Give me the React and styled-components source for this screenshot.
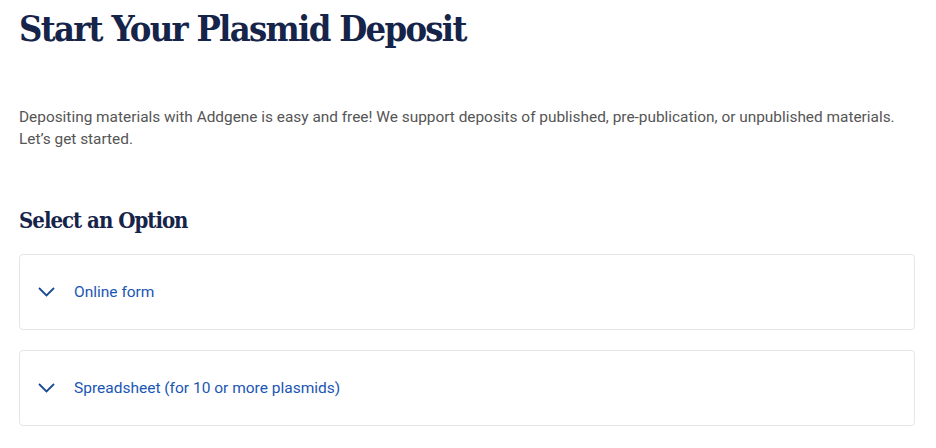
import React from 'react';
import styled, { createGlobalStyle } from 'styled-components';

const GlobalStyle = createGlobalStyle`
  body {
    margin: 0;
    background: #ffffff;
    font-family: Roboto, "Liberation Sans", sans-serif;
  }
`;

const Page = styled.main`
  padding: 4px 21px 0 19px;
`;

const Title = styled.h1`
  margin: 0;
  font-family: "DejaVu Serif Condensed", "DejaVu Serif", serif;
  font-stretch: condensed;
  font-weight: 700;
  font-size: 36px;
  line-height: 48px;
  color: #16244a;
  letter-spacing: -1.7px;
`;

const Intro = styled.p`
  margin: 54px 0 0;
  font-size: 15.4px;
  line-height: 22px;
  color: #555555;
`;

const SectionTitle = styled.h2`
  margin: 54px 0 0;
  font-family: "DejaVu Serif Condensed", "DejaVu Serif", serif;
  font-stretch: condensed;
  font-weight: 700;
  font-size: 22px;
  line-height: 32px;
  color: #16244a;
  letter-spacing: -1px;
`;

const Options = styled.div`
  display: flex;
  flex-direction: column;
  gap: 20px;
  margin-top: 18px;
`;

const Option = styled.button`
  display: flex;
  align-items: center;
  gap: 19px;
  height: 76px;
  padding: 0 0 0 18px;
  background: #ffffff;
  border: 1px solid #e6e6e6;
  border-radius: 4px;
  font-family: Roboto, "Liberation Sans", sans-serif;
  font-size: 15.5px;
  color: #1a56b4;
  text-align: left;
  cursor: pointer;
`;

const Chevron = () => (
  <svg width="17" height="10" viewBox="0 0 17 10" fill="none">
    <path d="M1 1l7.5 7.5L16 1" stroke="#1a4a94" strokeWidth="1.8" />
  </svg>
);

export default function App() {
  return (
    <>
      <GlobalStyle />
      <Page>
        <Title>Start Your Plasmid Deposit</Title>
        <Intro>
          Depositing materials with Addgene is easy and free! We support deposits of published,
          pre-publication, or unpublished materials. Let’s get started.
        </Intro>
        <SectionTitle>Select an Option</SectionTitle>
        <Options>
          <Option>
            <Chevron />
            Online form
          </Option>
          <Option>
            <Chevron />
            Spreadsheet (for 10 or more plasmids)
          </Option>
        </Options>
      </Page>
    </>
  );
}
